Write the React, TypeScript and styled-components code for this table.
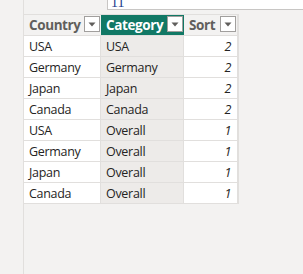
import { Fragment } from "react";
import styled, { createGlobalStyle } from "styled-components";

type Row = {
  country: string;
  category: string;
  sort: number;
};

const rows: Row[] = [
  { country: "USA", category: "USA", sort: 2 },
  { country: "Germany", category: "Germany", sort: 2 },
  { country: "Japan", category: "Japan", sort: 2 },
  { country: "Canada", category: "Canada", sort: 2 },
  { country: "USA", category: "Overall", sort: 1 },
  { country: "Germany", category: "Overall", sort: 1 },
  { country: "Japan", category: "Overall", sort: 1 },
  { country: "Canada", category: "Overall", sort: 1 },
];

const GlobalStyle = createGlobalStyle`
  html, body {
    margin: 0;
    padding: 0;
    background: #f3f2f1;
    font-family: "Open Sans", "Noto Sans", sans-serif;
  }
`;

const Page = styled.div`
  display: flex;
  width: 303px;
  height: 274px;
  overflow: hidden;
`;

const Rail = styled.div`
  width: 23px;
  flex-shrink: 0;
  border-right: 1px solid #e1dfdd;
`;

const Main = styled.div`
  display: flex;
  flex-direction: column;
  flex: 1;
`;

const TopBar = styled.div`
  height: 14px;
  display: flex;
`;

const FormulaBox = styled.div`
  margin-left: 83px;
  flex: 1;
  height: 9px;
  background: #ffffff;
  border-left: 1px solid #c8c6c4;
  border-bottom: 1px solid #c8c6c4;
  overflow: hidden;
  position: relative;
`;

const FormulaText = styled.span`
  position: absolute;
  left: 3px;
  bottom: -1px;
  font-family: "Liberation Serif", serif;
  font-size: 14px;
  line-height: 14px;
  color: #1b3a8c;
`;

const Grid = styled.div`
  display: grid;
  grid-template-columns: 77px 83px 53px;
  width: 213px;
  border-top: 1px solid #e1dfdd;
  border-right: 2px solid #e1dfdd;
`;

const HeadCell = styled.div<{ $active?: boolean }>`
  height: 20px;
  display: flex;
  align-items: center;
  justify-content: space-between;
  padding: 0 1px 0 5px;
  background: ${(p) => (p.$active ? "#117865" : "#f3f2f1")};
  color: ${(p) => (p.$active ? "#ffffff" : "#605e5c")};
  font-size: 13.5px;
  font-weight: 700;
  letter-spacing: -0.4px;
  border-bottom: 1px solid #e1dfdd;
`;

const FilterBox = styled.span`
  width: 14px;
  height: 14px;
  display: flex;
  align-items: center;
  justify-content: center;
  background: #ffffff;
  border: 1px solid #a19f9d;
  margin-top: -2px;
`;

const Cell = styled.div<{ $shade?: boolean; $num?: boolean }>`
  height: 20px;
  display: flex;
  align-items: center;
  justify-content: ${(p) => (p.$num ? "flex-end" : "flex-start")};
  padding: 0 ${(p) => (p.$num ? "6px" : "4px")} 0 5px;
  background: ${(p) => (p.$shade ? "#edebe9" : "#ffffff")};
  color: #252423;
  font-size: 12.5px;
  font-style: ${(p) => (p.$num ? "italic" : "normal")};
  letter-spacing: -0.3px;
  border-bottom: 1px solid #e1dfdd;
  border-right: ${(p) => (p.$num ? "none" : "1px solid #e1dfdd")};
`;

function Filter() {
  return (
    <FilterBox>
      <svg width="8" height="5" viewBox="0 0 8 5">
        <path d="M0.5 0.5 H7.5 L4 4.5 Z" fill="#605e5c" />
      </svg>
    </FilterBox>
  );
}

export default function App() {
  return (
    <Page>
      <GlobalStyle />
      <Rail />
      <Main>
        <TopBar>
          <FormulaBox>
            <FormulaText>11</FormulaText>
          </FormulaBox>
        </TopBar>
        <Grid>
          <HeadCell>
            Country
            <Filter />
          </HeadCell>
          <HeadCell $active>
            Category
            <Filter />
          </HeadCell>
          <HeadCell>
            Sort
            <Filter />
          </HeadCell>
          {rows.map((r, i) => (
            <Fragment key={i}>
              <Cell>{r.country}</Cell>
              <Cell $shade>{r.category}</Cell>
              <Cell $num>{r.sort}</Cell>
            </Fragment>
          ))}
        </Grid>
      </Main>
    </Page>
  );
}
